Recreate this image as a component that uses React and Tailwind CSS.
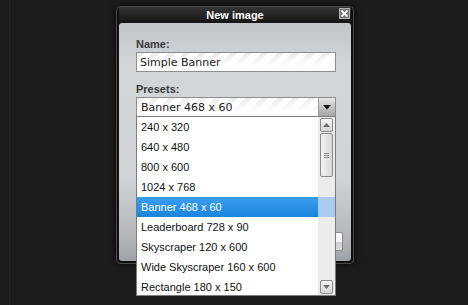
export default function App() {
  const items = [
    "240 x 320",
    "640 x 480",
    "800 x 600",
    "1024 x 768",
    "Banner 468 x 60",
    "Leaderboard 728 x 90",
    "Skyscraper 120 x 600",
    "Wide Skyscraper 160 x 600",
    "Rectangle 180 x 150",
  ];
  return (
    <div className="w-[468px] h-[305px] bg-[#1c1c1c] overflow-hidden flex font-['Liberation_Sans',sans-serif]">
      <div className="ml-[9px] w-px h-full bg-[#232323]" />
      <div className="relative mt-[6px] ml-[106px] w-[238px] h-[258px] rounded-[4px] border border-[#4a4a4a] bg-[#0f0f0f] px-[2px] pb-[2px] flex flex-col shadow-[0_0_6px_rgba(0,0,0,0.9)]">
        <div className="relative h-[16px] flex items-center justify-center bg-gradient-to-b from-[#353535] to-[#151515]">
          <span className="text-[11px] font-bold text-white leading-none pt-[1px]">New image</span>
          <div className="absolute right-[1px] top-[1px] w-[11px] h-[11px] border border-[#b0b0b0] bg-[#777] flex items-center justify-center">
            <svg width="7" height="7" viewBox="0 0 7 7">
              <path d="M0.5 0.5 L6.5 6.5 M6.5 0.5 L0.5 6.5" stroke="#fff" strokeWidth="1.8" />
            </svg>
          </div>
        </div>
        <div className="relative flex-1 rounded-[3px] bg-[linear-gradient(180deg,#c2c5c9_0%,#d3d6d9_18%,#d1d4d7_65%,#b3b6ba_90%,#9ea1a5_100%)] flex flex-col pl-[17px] pr-[8px] pt-[15px] pb-[10px]">
          <div className="h-[13px] leading-[13px] text-[11px] font-bold text-[#3a3a3a]">Name:</div>
          <div className="mt-[1px] w-[200px] h-[20px] border border-[#8e8e8e] bg-[linear-gradient(180deg,rgba(255,255,255,0)_0%,#ffffff_80%),repeating-linear-gradient(135deg,#ececec_0px,#ececec_5px,#ffffff_5px,#ffffff_11px)] flex items-center pl-[3px]">
            <span className="font-['DejaVu_Sans',sans-serif] text-[11px] text-[#222] leading-none">Simple Banner</span>
          </div>
          <div className="mt-[11px] h-[13px] leading-[13px] text-[11px] font-bold text-[#3a3a3a]">Presets:</div>
          <div className="relative mt-[1px] w-[200px] h-[20px] border border-[#8e8e8e] flex">
            <div className="flex-1 bg-[linear-gradient(180deg,rgba(255,255,255,0)_0%,#ffffff_80%),repeating-linear-gradient(135deg,#ececec_0px,#ececec_5px,#ffffff_5px,#ffffff_11px)] flex items-center pl-[4px]">
              <span className="font-['DejaVu_Sans',sans-serif] text-[11px] text-[#222] leading-none">Banner 468 x 60</span>
            </div>
            <div className="w-[17px] border-l border-[#9a9a9a] bg-gradient-to-b from-[#e6e6e6] to-[#a4a4a4] flex items-center justify-center">
              <svg width="8" height="5" viewBox="0 0 8 5">
                <path d="M0 0 H8 L4 4.5 Z" fill="#111" />
              </svg>
            </div>
            <div className="absolute left-[-1px] top-[18px] w-[200px] h-[180px] border border-[#7c7c7c] bg-white flex overflow-hidden z-10">
              <div className="w-[181px] flex flex-col">
                {items.map((t, i) => (
                  <div
                    key={t}
                    className={
                      i === 4
                        ? "h-[20px] shrink-0 flex items-center pl-[4px] text-[11px] text-white bg-gradient-to-b from-[#3a9df0] to-[#1a84dc]"
                        : "h-[20px] shrink-0 flex items-center pl-[4px] text-[11px] text-[#111]"
                    }
                  >
                    {t}
                  </div>
                ))}
              </div>
              <div className="relative w-[17px] bg-[#ececec] flex flex-col items-center pt-[1px] pb-[1px]">
                <div className="absolute left-0 right-0 top-[80px] h-[20px] bg-[#a9cdf0]" />
                <div className="relative w-[13px] h-[14px] rounded-[2px] border border-[#8a8a8a] bg-gradient-to-b from-[#f6f6f6] to-[#d4d4d4] flex items-center justify-center">
                  <svg width="7" height="4" viewBox="0 0 7 4">
                    <path d="M0 4 H7 L3.5 0 Z" fill="#6a6a6a" />
                  </svg>
                </div>
                <div className="relative mt-[1px] w-[13px] h-[44px] rounded-[2px] border border-[#8a8a8a] bg-gradient-to-r from-[#f4f4f4] to-[#d8d8d8] flex flex-col items-center justify-center gap-[1px]">
                  <div className="w-[5px] h-px bg-[#8a8a8a]" />
                  <div className="w-[5px] h-px bg-[#8a8a8a]" />
                  <div className="w-[5px] h-px bg-[#8a8a8a]" />
                </div>
                <div className="flex-1" />
                <div className="relative w-[13px] h-[14px] rounded-[2px] border border-[#8a8a8a] bg-gradient-to-b from-[#f6f6f6] to-[#d4d4d4] flex items-center justify-center">
                  <svg width="7" height="4" viewBox="0 0 7 4">
                    <path d="M0 0 H7 L3.5 4 Z" fill="#6a6a6a" />
                  </svg>
                </div>
              </div>
            </div>
          </div>
          <div className="mt-auto flex justify-end">
            <div className="w-[60px] h-[19px] rounded-[2px] border border-[#8a8a8a] bg-[linear-gradient(180deg,#ffffff_0%,#f4f4f4_50%,#cfcfcf_51%,#d8d8d8_100%)]" />
          </div>
        </div>
      </div>
    </div>
  );
}
